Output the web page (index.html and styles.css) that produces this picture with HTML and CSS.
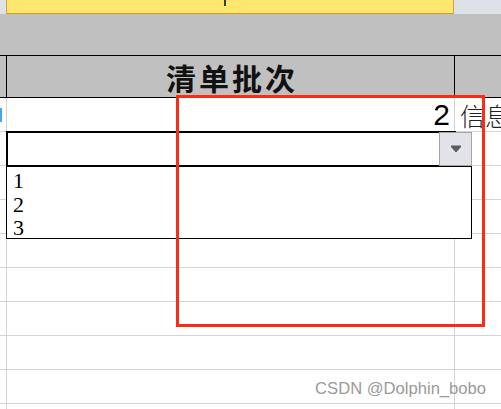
FILE: index.html
```html
<!DOCTYPE html>
<html>
<head>
<meta charset="utf-8">
<link rel="stylesheet" href="styles.css">
</head>
<body>
<div class="sheet">
  <div class="topbar">
    <div class="tb-side"></div>
    <div class="tb-name"><span class="caret"></span></div>
    <div class="tb-side grow"></div>
  </div>
  <div class="band"></div>
  <div class="row header">
    <div class="c0"></div>
    <div class="c1">清单批次</div>
    <div class="c2"></div>
  </div>
  <div class="row r2">
    <div class="c0"><span class="blue"></span></div>
    <div class="c1 num">2</div>
    <div class="c2 info">信息</div>
  </div>
  <div class="row"><div class="c0"></div><div class="c1"></div><div class="c2"></div></div>
  <div class="row"><div class="c0"></div><div class="c1"></div><div class="c2"></div></div>
  <div class="row"><div class="c0"></div><div class="c1"></div><div class="c2"></div></div>
  <div class="row"><div class="c0"></div><div class="c1"></div><div class="c2"></div></div>
  <div class="row"><div class="c0"></div><div class="c1"></div><div class="c2"></div></div>
  <div class="row"><div class="c0"></div><div class="c1"></div><div class="c2"></div></div>
  <div class="row"><div class="c0"></div><div class="c1"></div><div class="c2"></div></div>
  <div class="row"><div class="c0"></div><div class="c1"></div><div class="c2"></div></div>
  <div class="row"><div class="c0"></div><div class="c1"></div><div class="c2"></div></div>
</div>

<div class="dropdown">
  <div class="dd-field"></div>
  <div class="dd-button">
    <svg width="12" height="8" viewBox="0 0 12 8"><path d="M1 0.5 H11 V2 L6.5 7 H5.5 L1 2 Z" fill="#5a5a5e"/></svg>
  </div>
  <div class="dd-list">
    <div class="dd-item">1</div>
    <div class="dd-item">2</div>
    <div class="dd-item">3</div>
  </div>
</div>

<div class="highlight"></div>
<div class="watermark">CSDN @Dolphin_bobo</div>
</body>
</html>
```

FILE: styles.css
```css
* { box-sizing: border-box; }
html, body { margin: 0; padding: 0; }
body {
  width: 501px;
  height: 409px;
  overflow: hidden;
  position: relative;
  background: #ffffff;
  font-family: "Liberation Sans", Arial, sans-serif;
}

.sheet {
  display: flex;
  flex-direction: column;
  width: 501px;
  height: 409px;
  overflow: hidden;
}

.topbar {
  display: flex;
  flex: none;
  height: 14px;
}
.tb-side {
  width: 6px;
  background: #dde1e8;
}
.tb-side.grow { flex: 1; }
.tb-name {
  width: 448px;
  background: #ffe66f;
  border-left: 1px solid #d8a23a;
  border-right: 1px solid #d8a23a;
  border-bottom: 1px solid #d39a2c;
  padding-left: 217px;
}
.caret {
  display: block;
  width: 2px;
  height: 6px;
  background: #2f4436;
}

.band {
  flex: none;
  height: 41px;
  background: #c0c0c0;
}

.row {
  display: flex;
  flex: none;
  height: 34px;
  border-bottom: 1px solid #d4d4d4;
}
.c0 {
  width: 7px;
  border-right: 1px solid #d4d4d4;
  position: relative;
}
.c1 {
  width: 448px;
  border-right: 1px solid #d4d4d4;
}
.c2 {
  flex: 1;
  overflow: hidden;
}

.row.header {
  height: 43px;
  background: #c0c0c0;
  border-top: 1px solid #000;
  border-bottom: 1px solid #000;
}
.header .c0,
.header .c1 { border-right-color: #000; }
.header .c1 {
  display: flex;
  align-items: center;
  justify-content: center;
  padding-left: 3px;
  font-family: "Noto Sans CJK SC", sans-serif;
  font-weight: 700;
  font-size: 30px;
  letter-spacing: 3px;
  color: #111;
}

.row.r2 { height: 34px; }
.blue {
  display: block;
  width: 2px;
  height: 14px;
  margin-top: 10px;
  background: #45a6ee;
}
.num {
  display: flex;
  align-items: center;
  justify-content: flex-end;
  padding-right: 4px;
  font-family: "Liberation Sans", Arial, sans-serif;
  font-size: 30px;
  color: #000;
}
.info {
  display: flex;
  align-items: center;
  padding-left: 5px;
  white-space: nowrap;
  font-family: "Noto Sans CJK SC", sans-serif;
  font-size: 25px;
  font-weight: 300;
  color: #222;
}

/* dropdown popup over the grid */
.dropdown {
  position: absolute;
  left: 6px;
  top: 131px;
  width: 466px;
}
.dd-field {
  width: 450px;
  height: 36px;
  border: 2px solid #000;
  background: #fff;
}
.dd-button {
  position: absolute;
  left: 433px;
  top: 1px;
  width: 33px;
  height: 34px;
  background: #e1e3e8;
  border: 1px solid #a3a4a8;
  display: flex;
  align-items: center;
  justify-content: center;
}
.dd-list {
  width: 466px;
  height: 73px;
  margin-top: -1px;
  border: 1px solid #000;
  background: #fff;
  padding: 2px 0 0 6px;
}
.dd-item {
  font-family: "Liberation Serif", "Times New Roman", serif;
  font-size: 22px;
  line-height: 23.5px;
  color: #000;
}

/* red annotation box */
.highlight {
  position: absolute;
  left: 176px;
  top: 95px;
  width: 309px;
  height: 232px;
  border: 3px solid #ff2a12;
}

.watermark {
  position: absolute;
  right: 15px;
  top: 379px;
  font-family: "Liberation Sans", Arial, sans-serif;
  font-size: 16.6px;
  color: #9a9a9a;
  white-space: nowrap;
}
```
